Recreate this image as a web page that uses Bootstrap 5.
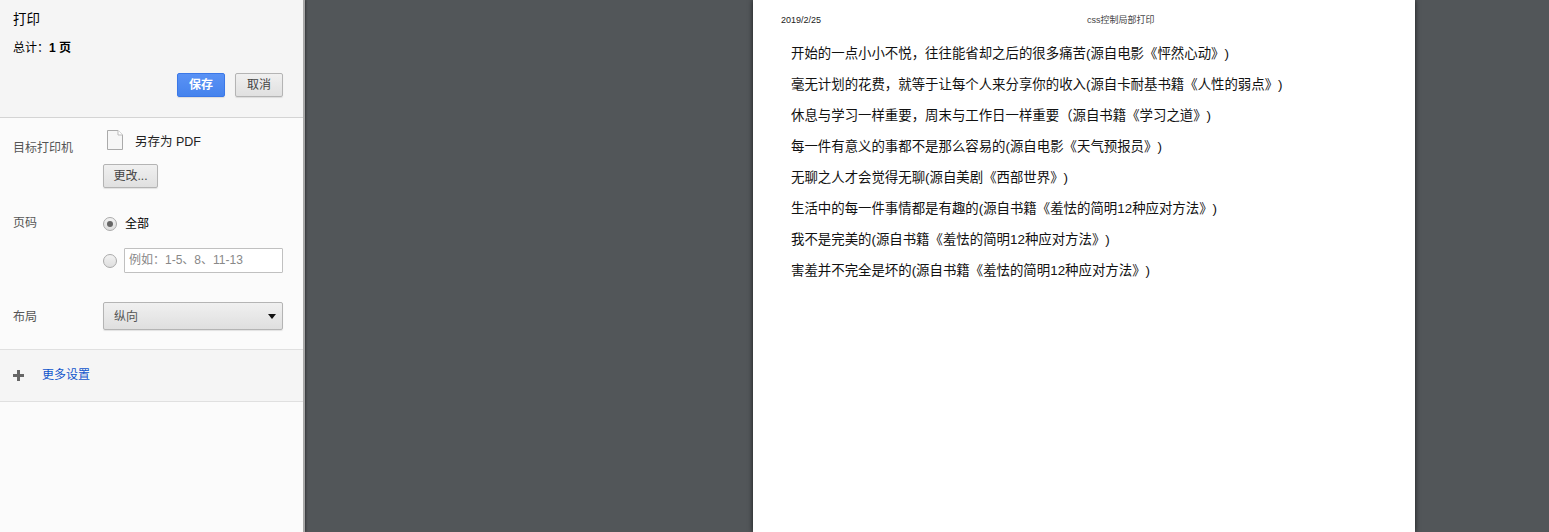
<!DOCTYPE html>
<html lang="zh-CN"><head><meta charset="utf-8"><title>打印</title>
<link href="https://cdn.jsdelivr.net/npm/bootstrap@5.3.0/dist/css/bootstrap.min.css" rel="stylesheet">
<style>
html,body{height:100%;overflow:hidden}
body{font-family:"Liberation Sans","Noto Sans CJK SC",sans-serif;font-size:12px;color:#000;background:#525659;text-spacing-trim:space-all}
.stage{height:532px}
.side{width:305px;flex:none;background:#fbfbfb;border-right:2px solid #a8a8a8;box-shadow:1px 0 2px rgba(0,0,0,.35);z-index:2}
.head{height:118px;background:#f5f5f5;border-bottom:1px solid #d4d4d4;padding:11px 20px 0 13px}
.ptitle{font-size:13.5px;line-height:18px;margin-bottom:11px}
.ptotal{font-size:12px;line-height:16px;margin-bottom:17px}
.acts{gap:10px}
.pbtn{height:24px;font-size:12px;line-height:22px;padding:0;border-radius:2px;border:1px solid #b4b4b4;background:linear-gradient(#f0f0f0,#e0e0e0);color:#444;box-shadow:0 1px 1px rgba(0,0,0,.1)}
.pbtn:hover{background:linear-gradient(#f0f0f0,#e0e0e0);color:#444;border-color:#b4b4b4}
.wsave{width:48px;background:linear-gradient(#5a92f5,#4583ed);border-color:#3b78e7;color:#fff;font-weight:700}
.wsave:hover{background:linear-gradient(#5a92f5,#4583ed);border-color:#3b78e7;color:#fff}
.wcancel{width:48px}
.wchange{width:55px;margin-top:14px}
.lab{width:90px;flex:none;color:#555}
.rowa{padding:12px 20px 0 13px;height:73px}
.lab-dest{padding-top:9px}
.dest{gap:12px;font-size:12.5px;line-height:16px;color:#222}
.dest span{padding-top:4px}
.docicon{margin-left:4px}
.rowb{padding:23px 20px 0 13px}
.rowb-first{height:18px;margin-top:1px}
.rowb-second{margin-top:15px}
.rowc{padding:29px 20px 0 13px}
.rowc .lab{padding-top:1px}
.radio-o{width:14px;height:14px;border-radius:50%;border:1px solid #aaa;background:linear-gradient(#f2f2f2,#dedede);flex:none;display:flex;align-items:center;justify-content:center}
.radio-o i{width:6px;height:6px;border-radius:50%;background:#666;display:block}
.radio-gap{gap:7px}
.radio-gap-wide{gap:8px}
.pageinput{width:159px;height:25px;border:1px solid #c0c0c0;border-radius:1px;padding:0 4px;font-size:12px;line-height:23px;color:#888;background:#fff}
.sel{width:180px;height:28px;border:1px solid #b4b4b4;border-radius:2px;background:linear-gradient(#f0f0f0,#dfdfdf);color:#555;padding:0 6px 0 10px;box-shadow:0 1px 1px rgba(0,0,0,.1)}
.sel span:first-child{padding-top:2px}
.caret-d{width:0;height:0;border-left:4.5px solid transparent;border-right:4.5px solid transparent;border-top:5px solid #111}
.more{height:53px;margin-top:19px;background:#f5f5f5;border-top:1px solid #e0e0e0;border-bottom:1px solid #e0e0e0;padding-left:13px;gap:18px}
.more a{color:#15c;text-decoration:none;padding-bottom:2px}
.plus{width:11px;height:11px;flex:none}
.canvas{flex:1;min-width:0;padding-left:448px}
.sheet{width:662px;height:532px;background:#fff;box-shadow:0 0 5px rgba(0,0,0,.7);padding:14px 0 0 28px}
.shead{font-size:9px;line-height:12px;color:#222;margin-bottom:18px}
.shead .d{width:306px}
.shead .t{color:#444}
.line{font-size:13.42px;line-height:20px;margin:0 0 11px 10px;color:#111}
</style></head>
<body>
<div class="stage d-flex">
 <aside class="side">
  <div class="head">
   <div class="ptitle">打印</div>
   <div class="ptotal">总计：<b>1 页</b></div>
   <div class="d-flex justify-content-end acts">
    <button class="btn pbtn wsave">保存</button><button class="btn pbtn wcancel">取消</button>
   </div>
  </div>
  <div class="d-flex rowa">
   <div class="lab lab-dest">目标打印机</div>
   <div>
    <div class="d-flex align-items-center dest">
     <svg class="docicon" width="16" height="20" viewBox="0 0 16 20"><path d="M.5.5h10.500l4.500 4.500v14.500H.5z" fill="#f6f6f6" stroke="#aaa"/><path d="M11 .5v4.500h4.500" fill="#fff" stroke="#bbb"/></svg>
     <span>另存为 PDF</span>
    </div>
    <button class="btn pbtn wchange">更改...</button>
   </div>
  </div>
  <div class="d-flex rowb">
   <div class="lab">页码</div>
   <div class="flex-grow-1">
    <div class="d-flex align-items-center radio-gap-wide rowb-first"><span class="radio-o"><i></i></span><span>全部</span></div>
    <div class="d-flex align-items-center radio-gap rowb-second"><span class="radio-o"></span><div class="pageinput">例如：1-5、8、11-13</div></div>
   </div>
  </div>
  <div class="d-flex align-items-center rowc">
   <div class="lab">布局</div>
   <div class="sel d-flex align-items-center justify-content-between"><span>纵向</span><span class="caret-d"></span></div>
  </div>
  <div class="more d-flex align-items-center">
   <svg class="plus" viewBox="0 0 11 11"><path d="M0 4h4V0h3v4h4v3H7v4H4V7H0z" fill="#666"/></svg>
   <a href="#">更多设置</a>
  </div>
 </aside>
 <main class="canvas">
  <div class="sheet">
   <div class="shead d-flex"><div class="d">2019/2/25</div><div class="t">css控制局部打印</div></div>
   <p class="line">开始的一点小小不悦，往往能省却之后的很多痛苦(源自电影《怦然心动》)</p>
   <p class="line">毫无计划的花费，就等于让每个人来分享你的收入(源自卡耐基书籍《人性的弱点》)</p>
   <p class="line">休息与学习一样重要，周末与工作日一样重要（源自书籍《学习之道》)</p>
   <p class="line">每一件有意义的事都不是那么容易的(源自电影《天气预报员》)</p>
   <p class="line">无聊之人才会觉得无聊(源自美剧《西部世界》)</p>
   <p class="line">生活中的每一件事情都是有趣的(源自书籍《羞怯的简明12种应对方法》)</p>
   <p class="line">我不是完美的(源自书籍《羞怯的简明12种应对方法》)</p>
   <p class="line">害羞并不完全是坏的(源自书籍《羞怯的简明12种应对方法》)</p>
  </div>
 </main>
</div>
<script src="https://cdn.jsdelivr.net/npm/bootstrap@5.3.0/dist/js/bootstrap.bundle.min.js"></script>
</body></html>
